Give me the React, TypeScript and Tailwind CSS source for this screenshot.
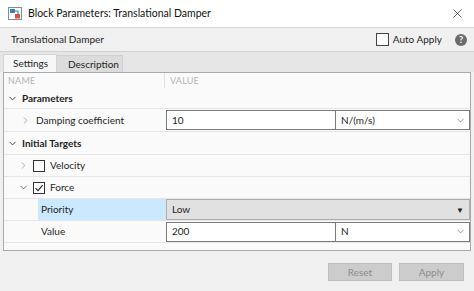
import { ChevronDown, ChevronRight, X } from "lucide-react";

function BlockIcon() {
  return (
    <svg width="14" height="13" viewBox="0 0 14 13" aria-hidden="true">
      <rect x="0.5" y="0.5" width="13" height="12" fill="#fff" stroke="#7d8ea3" />
      <rect x="2" y="2" width="5" height="4" fill="#3a7fc4" />
      <path d="M7 4h3v3" stroke="#3a7fc4" strokeWidth="1.2" fill="none" />
      <rect x="7" y="7" width="5" height="4.5" fill="#e0503a" />
    </svg>
  );
}

function Check({ checked }: { checked?: boolean }) {
  return (
    <span className="w-[12px] h-[12px] border border-[#333] bg-white flex items-center justify-center shrink-0">
      {checked && (
        <svg width="10" height="10" viewBox="0 0 10 10" aria-hidden="true">
          <path d="M1.5 5.2 4 7.6 8.6 2.2" stroke="#222" strokeWidth="1.1" fill="none" />
        </svg>
      )}
    </span>
  );
}

function Row({ children, className = "" }: { children: React.ReactNode; className?: string }) {
  return <div className={`flex items-center border-b border-[#e6e6e6] ${className}`}>{children}</div>;
}

function ValueCells({ value, unit }: { value: string; unit: string }) {
  return (
    <div className="flex h-[20px] flex-1">
      <div className="w-[170px] border border-[#7a7a7a] bg-white flex items-center pl-[5px]">{value}</div>
      <div className="flex-1 -ml-px border border-[#7a7a7a] bg-white flex items-center justify-between pl-[5px] pr-[3px]">
        <span>{unit}</span>
        <ChevronDown size={11} strokeWidth={1.3} className="text-[#555]" />
      </div>
    </div>
  );
}

export default function App() {
  return (
    <div className="w-[474px] h-[291px] bg-[#f0f0f0] font-['Lato',sans-serif] text-[10px] text-[#1e1e1e] overflow-hidden flex flex-col">
      {/* Title bar */}
      <div className="h-[28px] bg-white border-b border-[#d6d6d6] flex items-center pl-[8px] pr-[9px] shrink-0">
        <BlockIcon />
        <span className="ml-[6px] text-[10.5px] text-[#111]">Block Parameters: Translational Damper</span>
        <X size={15} strokeWidth={1.1} className="ml-auto text-[#222]" />
      </div>

      {/* Header */}
      <div className="h-[24px] border-b border-[#d2d2d2] flex items-center pl-[11px] pr-[7px] shrink-0">
        <span>Translational Damper</span>
        <div className="ml-auto flex items-center">
          <span className="w-[13px] h-[13px] border border-[#444] bg-white" />
          <span className="ml-[4px]">Auto Apply</span>
          <span className="ml-[13px] w-[12px] h-[12px] rounded-full bg-[#6b6b6b] text-white text-[9px] font-bold flex items-center justify-center leading-none">
            ?
          </span>
        </div>
      </div>

      {/* Tabs */}
      <div className="h-[20px] bg-[#e6e6e6] flex items-end pl-[3px] shrink-0">
        <div className="h-[18px] w-[54px] bg-[#f7f7f7] border-t border-x border-[#d4d4d4] flex items-center pl-[9px]">
          Settings
        </div>
        <div className="h-[17px] w-[66px] bg-[#dcdcdc] border-t border-r border-[#cfcfcf] flex items-center pl-[11px]">
          Description
        </div>
      </div>

      {/* Property table */}
      <div className="mx-[3px] h-[179px] border border-[#a9a9a9] bg-[#fafafa] flex flex-col shrink-0">
        <div className="h-[15px] flex text-[9px] text-[#b4b4b4] tracking-wide">
          <div className="w-[161px] border-r border-[#e2e2e2] pl-[4px] flex items-center">NAME</div>
          <div className="pl-[5px] flex items-center">VALUE</div>
        </div>

        <Row className="h-[21px] font-bold">
          <ChevronDown size={11} strokeWidth={2} className="ml-[3px] text-[#333]" />
          <span className="ml-[4px]">Parameters</span>
        </Row>

        <Row className="h-[23px]">
          <div className="w-[162px] flex items-center">
            <ChevronRight size={11} strokeWidth={1.3} className="ml-[16px] text-[#777]" />
            <span className="ml-[5px]">Damping coefficient</span>
          </div>
          <ValueCells value="10" unit="N/(m/s)" />
        </Row>

        <Row className="h-[23px] font-bold">
          <ChevronDown size={11} strokeWidth={2} className="ml-[3px] text-[#333]" />
          <span className="ml-[4px]">Initial Targets</span>
        </Row>

        <Row className="h-[22px]">
          <ChevronRight size={11} strokeWidth={1.3} className="ml-[14px] text-[#777]" />
          <span className="ml-[4px]">
            <Check />
          </span>
          <span className="ml-[5px]">Velocity</span>
        </Row>

        <Row className="h-[22px]">
          <ChevronDown size={11} strokeWidth={1.5} className="ml-[14px] text-[#333]" />
          <span className="ml-[4px]">
            <Check checked />
          </span>
          <span className="ml-[5px]">Force</span>
        </Row>

        <Row className="h-[22px]">
          <div className="w-[162px] h-full flex items-stretch">
            <div className="ml-[34px] flex-1 bg-[#cce8ff] flex items-center pl-[3px]">Priority</div>
          </div>
          <div className="flex-1 h-[21px] border border-[#adadad] bg-[#e1e1e1] flex items-center justify-between pl-[5px] pr-[5px]">
            <span>Low</span>
            <span className="text-[8px] leading-none">▼</span>
          </div>
        </Row>

        <Row className="h-[22px]">
          <div className="w-[162px] pl-[37px]">Value</div>
          <ValueCells value="200" unit="N" />
        </Row>
      </div>

      {/* Footer */}
      <div className="flex justify-end gap-[7px] pr-[10px] pt-[12px]">
        <button className="w-[64px] h-[18px] bg-[#cccccc] border border-[#bfbfbf] text-[#8c8c8c] text-[10px]">Reset</button>
        <button className="w-[65px] h-[18px] bg-[#cccccc] border border-[#bfbfbf] text-[#8c8c8c] text-[10px]">Apply</button>
      </div>
    </div>
  );
}
